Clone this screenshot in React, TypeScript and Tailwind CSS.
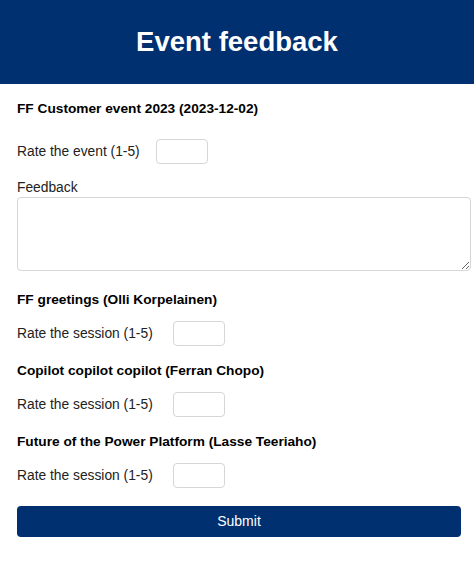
import { useState } from "react";

type Session = { title: string };

const sessions: Session[] = [
  { title: "FF greetings (Olli Korpelainen)" },
  { title: "Copilot copilot copilot (Ferran Chopo)" },
  { title: "Future of the Power Platform (Lasse Teeriaho)" },
];

const inputClass =
  "w-[52px] h-[25px] rounded-[4px] border border-[#d6d6d6] bg-white px-2 text-[14px] outline-none";

export const App = () => {
  const [eventRating, setEventRating] = useState<string>("");
  const [feedback, setFeedback] = useState<string>("");
  const [ratings, setRatings] = useState<string[]>(() => sessions.map(() => ""));

  const handleRating = (index: number, value: string): void => {
    setRatings((prev) => prev.map((r, i) => (i === index ? value : r)));
  };

  return (
    <div
      className="min-h-screen w-full bg-white text-[#222]"
      style={{ fontFamily: '"Liberation Sans", Arial, sans-serif' }}
    >
      {/* Header */}
      <div className="h-[84px] bg-[#003070] flex items-center justify-center">
        <h1 className="text-[27.5px] font-bold text-white leading-none">Event feedback</h1>
      </div>

      <form className="px-[17px] pb-6" onSubmit={(e) => e.preventDefault()}>
        <h2 className="mt-[17px] text-[13.7px] leading-4 font-bold text-black">
          FF Customer event 2023 (2023-12-02)
        </h2>

        <div className="mt-[22px] flex items-center">
          <label className="w-[139px] text-[13.8px] leading-4">Rate the event (1-5)</label>
          <input
            className={inputClass}
            value={eventRating}
            onChange={(e) => setEventRating(e.target.value)}
          />
        </div>

        <label className="mt-[16px] block text-[13.8px] leading-4">Feedback</label>
        <textarea
          className="mt-[1px] block w-[454px] h-[74px] rounded-[4px] border border-[#d6d6d6] px-2 py-1 text-[14px] outline-none"
          value={feedback}
          onChange={(e) => setFeedback(e.target.value)}
        />

        {sessions.map((s, i) => (
          <div key={i} className={i === 0 ? "mt-[21px]" : "mt-[17px]"}>
            <h2 className="text-[13.7px] leading-4 font-bold text-black">{s.title}</h2>
            <div className="mt-[13px] flex items-center">
              <label className="w-[156px] text-[13.8px] leading-4">Rate the session (1-5)</label>
              <input
                className={inputClass}
                value={ratings[i]}
                onChange={(e) => handleRating(i, e.target.value)}
              />
            </div>
          </div>
        ))}

        <button
          type="submit"
          className="mt-[18px] w-[444px] h-[31px] rounded-[4px] bg-[#003070] text-white text-[14px]"
        >
          Submit
        </button>
      </form>
    </div>
  );
};

export default App;
